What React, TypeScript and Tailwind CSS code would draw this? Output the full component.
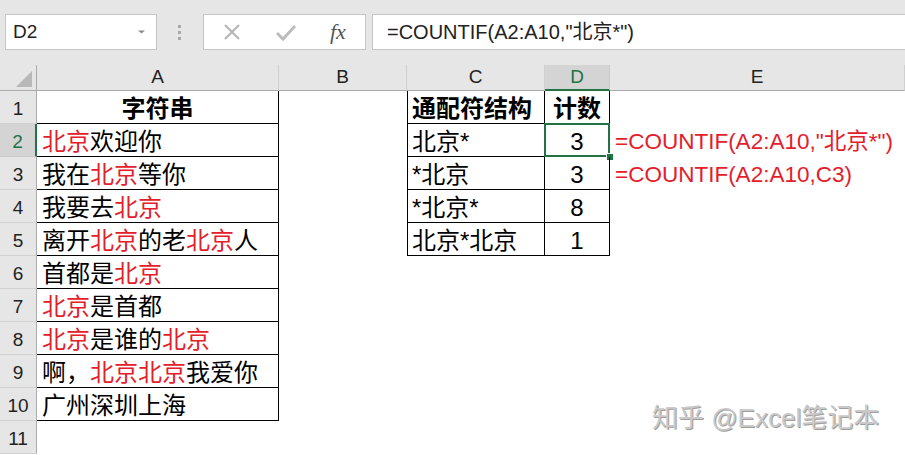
import React from "react";

const RED = "text-[#e3202a]";

type Seg = { t: string; red?: boolean };

// split text so that 北京 is red
function parts(s: string): Seg[] {
  const out: Seg[] = [];
  s.split(/(北京)/).forEach((p) => {
    if (p) out.push({ t: p, red: p === "北京" });
  });
  return out;
}

const colA = [
  "北京欢迎你",
  "我在北京等你",
  "我要去北京",
  "离开北京的老北京人",
  "首都是北京",
  "北京是首都",
  "北京是谁的北京",
  "啊，北京北京我爱你",
  "广州深圳上海",
];

const table2 = [
  ["北京*", "3"],
  ["*北京", "3"],
  ["*北京*", "8"],
  ["北京*北京", "1"],
];

const formulas = ['=COUNTIF(A2:A10,"北京*")', "=COUNTIF(A2:A10,C3)"];

export default function App() {
  const cols = ["A", "B", "C", "D", "E"];
  const rows = Array.from({ length: 11 }, (_, i) => i + 1);

  return (
    <div
      className="w-[905px] h-[455px] bg-white overflow-hidden flex flex-col text-black"
      style={{ fontFamily: '"Liberation Sans", "Noto Sans CJK SC", sans-serif' }}
    >
      {/* Formula bar */}
      <div className="h-[65px] bg-[#e6e6e6] flex items-start pt-[14px] pl-[5px] shrink-0">
        <div className="w-[152px] h-[36px] bg-white border border-[#c6c6c6] flex items-center justify-between pl-[7px] pr-[10px]">
          <span className="text-[19px] text-[#222]">D2</span>
          <svg width="9" height="6" viewBox="0 0 9 6">
            <path d="M1 1.5 L4.5 4.5 L8 1.5 Z" fill="#8a8a8a" />
          </svg>
        </div>
        <div className="w-[44px] h-[36px] flex flex-col items-center justify-center gap-[3px]">
          <span className="w-[3px] h-[3px] bg-[#a8a8a8]" />
          <span className="w-[3px] h-[3px] bg-[#a8a8a8]" />
          <span className="w-[3px] h-[3px] bg-[#a8a8a8]" />
        </div>
        <div className="w-[163px] ml-[2px] h-[36px] bg-white border border-[#c6c6c6] flex items-center pl-[18px]">
          <svg width="20" height="20" viewBox="0 0 20 20">
            <path d="M3 3 L17 17 M17 3 L3 17" stroke="#b5b5b5" strokeWidth="2" />
          </svg>
          <svg width="22" height="20" viewBox="0 0 22 20" className="ml-[33px]">
            <path d="M2 11 L8 17 L20 4" stroke="#bcbcbc" strokeWidth="3" fill="none" />
          </svg>
          <span
            className="ml-[33px] text-[22px] italic text-[#555] leading-none"
            style={{ fontFamily: '"Liberation Serif", serif' }}
          >
            fx
          </span>
        </div>
        <div className="flex-1 ml-[6px] h-[36px] bg-white border border-r-0 border-[#c6c6c6] flex items-center pl-[14px]">
          <span className="text-[20px] text-[#222]">=COUNTIF(A2:A10,"北京*")</span>
        </div>
      </div>

      {/* Sheet */}
      <div className="grid grid-cols-[37px_242px_128px_138px_65px_1fr] grid-rows-[26px_repeat(11,33px)]">
        {/* corner */}
        <div className="bg-[#e6e6e6] border-r border-b border-[#ababab] flex items-end justify-end pr-[4px] pb-[3px]">
          <svg width="16" height="16" viewBox="0 0 16 16">
            <path d="M16 0 L16 16 L0 16 Z" fill="#b8b8b8" />
          </svg>
        </div>
        {cols.map((c) => (
          <div
            key={c}
            className={
              c === "D"
                ? "bg-[#d4d4d4] border-r border-[#c9c9c9] border-b-2 border-b-[#217346] flex items-center justify-center text-[19px] text-[#217346]"
                : "bg-[#e6e6e6] border-r border-[#d0d0d0] border-b border-b-[#ababab] flex items-center justify-center text-[19px] text-[#222]"
            }
          >
            {c}
          </div>
        ))}

        {rows.map((r) => (
          <React.Fragment key={r}>
            <div
              className={
                r === 2
                  ? "bg-[#d4d4d4] border-r-2 border-[#217346] border-b border-b-[#c9c9c9] flex items-center justify-center pt-[4px] text-[19px] text-[#217346]"
                  : "bg-[#e6e6e6] border-r border-[#ababab] border-b border-b-[#d0d0d0] flex items-center justify-center pt-[4px] text-[19px] text-[#222]"
              }
            >
              {r}
            </div>

            {/* A */}
            {r === 1 ? (
              <div className="border-r border-b border-black flex items-center justify-center pt-[3px] text-[24px] font-bold">
                字符串
              </div>
            ) : r <= 10 ? (
              <div className="border-r border-b border-black flex items-center pl-[5px] pt-[3px] text-[24px] whitespace-nowrap">
                {parts(colA[r - 2]).map((p, i) => (
                  <span key={i} className={p.red ? RED : ""}>
                    {p.t}
                  </span>
                ))}
              </div>
            ) : (
              <div />
            )}

            {/* B */}
            <div />

            {/* C */}
            {r === 1 ? (
              <div className="border-l border-r border-b border-black flex items-center pl-[4px] pt-[3px] text-[24px] font-bold">
                通配符结构
              </div>
            ) : r <= 5 ? (
              <div className="border-l border-r border-b border-black flex items-center pl-[4px] pt-[3px] text-[24px] whitespace-nowrap">
                {table2[r - 2][0]}
              </div>
            ) : (
              <div />
            )}

            {/* D */}
            {r === 1 ? (
              <div className="border-r border-b border-black flex items-center justify-center pt-[3px] text-[24px] font-bold">
                计数
              </div>
            ) : r <= 5 ? (
              <div className="relative border-r border-b border-black flex items-center justify-center pt-[3px] text-[24px]">
                {table2[r - 2][1]}
                {r === 2 && (
                  <>
                    <div className="absolute -left-[1px] -top-[1px] -right-[1px] -bottom-[1px] border-2 border-[#217346]" />
                    <div className="absolute -right-[5px] -bottom-[5px] w-[8px] h-[8px] bg-[#217346] border border-white" />
                  </>
                )}
              </div>
            ) : (
              <div />
            )}

            {/* E */}
            {r === 2 || r === 3 ? (
              <div className={`flex items-center pl-[5px] pt-[3px] text-[22.5px] whitespace-nowrap ${RED}`}>
                {formulas[r - 2]}
              </div>
            ) : r === 11 ? (
              <div className="flex items-start pl-[42px] -mt-[16px]">
                <span
                  className="text-[26px] leading-none text-[#c9c9c9] whitespace-nowrap"
                  style={{ textShadow: "1px 1px 0 #9e9e9e, -1px -1px 0 #ffffff" }}
                >
                  知乎 @Excel笔记本
                </span>
              </div>
            ) : (
              <div />
            )}
          </React.Fragment>
        ))}
      </div>
    </div>
  );
}
